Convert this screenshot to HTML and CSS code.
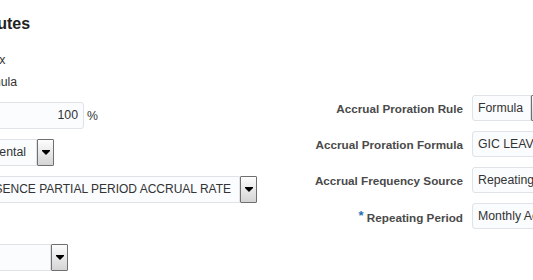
FILE: index.html
```html
<!DOCTYPE html>
<html>
<head>
<meta charset="utf-8">
<link rel="stylesheet" href="styles.css">
</head>
<body>
<div class="page">
  <div class="left">
    <h2 class="title">Accrual Attributes</h2>
    <div class="radio">Matrix</div>
    <div class="radio">Formula</div>
    <div class="fields">
      <div class="row">
        <div class="box num" style="width:144px">100</div>
        <span class="unit">%</span>
      </div>
      <div class="row">
        <div class="select">
          <div class="box val" style="width:97px">Incremental</div>
          <div class="btn"><svg width="8" height="5" viewBox="0 0 8 5"><path d="M0 0h8v1L4 5 0 1z" fill="#000"/></svg></div>
        </div>
      </div>
      <div class="row">
        <div class="select">
          <div class="box val long" style="width:300px">ABSENCE PARTIAL PERIOD ACCRUAL RATE</div>
          <div class="btn"><svg width="8" height="5" viewBox="0 0 8 5"><path d="M0 0h8v1L4 5 0 1z" fill="#000"/></svg></div>
        </div>
      </div>
      <div class="row spacer"></div>
      <div class="row">
        <div class="select">
          <div class="box val" style="width:111px"></div>
          <div class="btn"><svg width="8" height="5" viewBox="0 0 8 5"><path d="M0 0h8v1L4 5 0 1z" fill="#000"/></svg></div>
        </div>
      </div>
    </div>
  </div>
  <div class="right">
    <div class="label">Accrual Proration Rule</div>
    <div class="select">
      <div class="box val" style="width:59px">Formula</div>
      <div class="btn"><svg width="8" height="5" viewBox="0 0 8 5"><path d="M0 0h8v1L4 5 0 1z" fill="#000"/></svg></div>
    </div>
    <div class="label">Accrual Proration Formula</div>
    <div class="box wide">GIC LEAVE PRORATION FORMULA</div>
    <div class="label">Accrual Frequency Source</div>
    <div class="box wide">Repeating Period</div>
    <div class="label"><span class="req">*</span> Repeating Period</div>
    <div class="box wide">Monthly Accrual Period</div>
  </div>
</div>
</body>
</html>
```
FILE: styles.css
```css
html, body {
  margin: 0;
  padding: 0;
  overflow: hidden;
  background: #fff;
}
body {
  font-family: "Liberation Sans", Arial, sans-serif;
  color: #333;
  width: 533px;
  height: 280px;
}
.page {
  display: flex;
  align-items: flex-start;
}
.left {
  margin-left: -130px;
  width: 430px;
  flex: none;
  display: flex;
  flex-direction: column;
  align-items: flex-start;
}
.title {
  margin: 14px 0 0 22px;
  font-size: 16px;
  line-height: 20px;
  font-weight: bold;
  color: #222;
  white-space: nowrap;
}
.radio {
  font-size: 12.3px;
  line-height: 22px;
  margin-left: 102px;
  color: #333;
  white-space: nowrap;
}
.title + .radio {
  margin-top: 15px;
}
.fields {
  margin-top: 9px;
  margin-left: 70px;
  display: flex;
  flex-direction: column;
  gap: 10px;
}
.row {
  display: flex;
  align-items: center;
  height: 27px;
}
.row.spacer {
  height: 21px;
}
.box {
  box-sizing: border-box;
  height: 27px;
  border: 1px solid #dfe3e8;
  border-radius: 3px;
  background: #fafcfe;
  font-size: 12.3px;
  line-height: 25px;
  padding: 0 5px;
  color: #333;
  white-space: nowrap;
  overflow: hidden;
}
.num {
  text-align: right;
}
.unit {
  font-size: 12.3px;
  margin-left: 3px;
  color: #333;
}
.select {
  display: flex;
  align-items: stretch;
  height: 27px;
}
.select .val {
  border-radius: 3px 0 0 3px;
}
.left .val {
  text-align: right;
  padding-right: 10px;
}
.left .val.long {
  padding-right: 8px;
  font-size: 12px;
}
.btn {
  box-sizing: border-box;
  width: 17px;
  height: 27px;
  border: 1px solid #6f6f6f;
  border-radius: 1px;
  background: linear-gradient(#fdfdfd, #d4d4d4);
  display: flex;
  align-items: center;
  justify-content: center;
  flex: none;
}
.right {
  flex: none;
  margin-top: 95px;
  display: grid;
  grid-template-columns: 163px auto;
  column-gap: 9px;
  row-gap: 10px;
  align-items: center;
}
.label {
  text-align: right;
  font-size: 11.7px;
  font-weight: bold;
  color: #4a4a4a;
  white-space: nowrap;
}
.req {
  color: #1f6fb5;
  font-size: 13px;
  vertical-align: 2px;
}
.right .box {
  height: 26px;
  line-height: 24px;
}
.right .select {
  height: 26px;
}
.right .btn {
  height: 26px;
}
.box.wide {
  width: 200px;
}
```
